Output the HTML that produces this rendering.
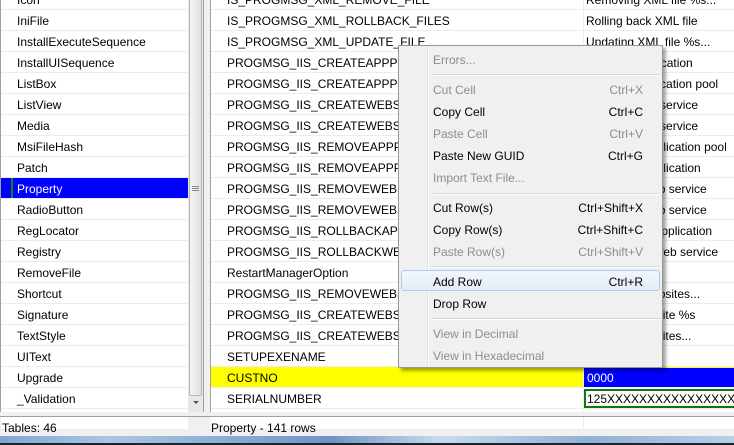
<!DOCTYPE html>
<html><head><style>
body{margin:0;width:734px;height:445px;overflow:hidden;background:#f0f0f0;font-family:"Liberation Sans",sans-serif;font-size:12px;position:relative}
.a{position:absolute;white-space:nowrap}
.lr{position:absolute;left:1px;width:187px;height:20px;border-bottom:1px solid #ececec;background:#fff;line-height:23px;text-indent:16px;overflow:hidden}
.rr{position:absolute;left:211px;width:523px;height:20px;border-bottom:1px solid #ececec;background:#fff;line-height:23px;overflow:hidden}
.rr .c1{position:absolute;left:16px}
.rr .c2{position:absolute;left:375px}
.rr .d{position:absolute;left:372px;top:0;width:1px;height:21px;background:#ececec}
.m{position:absolute;left:433px;color:#000}
.g{color:#8d8d8d}
.k{position:absolute;right:0}
.sep{position:absolute;left:431px;width:229px;height:1px;background:#d7d7d7;border-bottom:1px solid #fff}
</style></head><body>
<div class="a" style="left:0;top:0;width:1px;height:412px;background:#a0a0a0"></div>
<div id="L"></div>
<div class="a" style="left:188px;top:0;width:15px;height:412px;background:#e8e8e8"></div>
<div class="a" style="left:189px;top:0;width:13px;height:396px;background:linear-gradient(90deg,#f4f4f4,#e2e2e2);border:1px solid #b5b5b5;border-top:none;box-sizing:border-box;border-radius:0 0 2px 2px"></div>
<div class="a" style="left:192px;top:186px;width:7px;height:1px;background:#888;box-shadow:0 2px 0 #888,0 4px 0 #888"></div>
<div class="a" style="left:193px;top:401px;width:0;height:0;border-left:3px solid transparent;border-right:3px solid transparent;border-top:3px solid #555"></div>
<div class="a" style="left:203px;top:0;width:1px;height:412px;background:#a0a0a0"></div>
<div class="a" style="left:210px;top:0;width:1px;height:412px;background:#a0a0a0"></div>
<div id="R"></div>
<div class="a" style="left:0;top:412px;width:734px;height:4px;background:#f0f0f0"></div>
<div class="a" style="left:0;top:416px;width:734px;height:1px;background:#a0a0a0"></div>
<div class="a" style="left:2px;top:421px">Tables: 46</div>
<div class="a" style="left:211px;top:421px">Property - 141 rows</div>
<div class="a" style="left:0;top:436px;width:734px;height:7px;background:linear-gradient(90deg,#7fa6d4,#a8c6e8 15%,#6e94c6 45%,#c6dbf1 60%,#8fb0d8 80%,#b7cfeb)"></div>
<div class="a" style="left:0;top:443px;width:734px;height:2px;background:#222"></div>

<div class="a" style="left:398px;top:45px;width:265px;height:323px;background:#f0f0f0;border:1px solid #979797;box-sizing:border-box;box-shadow:3px 3px 3px rgba(0,0,0,.35)"></div>
<div class="a" style="left:427px;top:47px;width:1px;height:319px;background:#e2e3e3;border-right:1px solid #fff"></div>
<div class="a" style="left:401px;top:270px;width:259px;height:21px;background:linear-gradient(#f3f7fc,#e4edf8);border:1px solid #aecbee;box-sizing:border-box;border-radius:3px"></div>
<div class="a m g" style="top:53px">Errors...</div>
<div class="sep" style="top:74px"></div>
<div class="a m g" style="top:83px;width:210px">Cut Cell<span class="k">Ctrl+X</span></div>
<div class="a m" style="top:105px;width:210px">Copy Cell<span class="k">Ctrl+C</span></div>
<div class="a m g" style="top:127px;width:210px">Paste Cell<span class="k">Ctrl+V</span></div>
<div class="a m" style="top:149px;width:210px">Paste New GUID<span class="k">Ctrl+G</span></div>
<div class="a m g" style="top:171px">Import Text File...</div>
<div class="sep" style="top:193px"></div>
<div class="a m" style="top:201px;width:210px">Cut Row(s)<span class="k">Ctrl+Shift+X</span></div>
<div class="a m" style="top:223px;width:210px">Copy Row(s)<span class="k">Ctrl+Shift+C</span></div>
<div class="a m g" style="top:245px;width:210px">Paste Row(s)<span class="k">Ctrl+Shift+V</span></div>
<div class="sep" style="top:266px"></div>
<div class="a m" style="top:275px;width:210px">Add Row<span class="k">Ctrl+R</span></div>
<div class="a m" style="top:297px">Drop Row</div>
<div class="sep" style="top:318px"></div>
<div class="a m g" style="top:327px">View in Decimal</div>
<div class="a m g" style="top:349px">View in Hexadecimal</div>
<script>
var L=["Icon","IniFile","InstallExecuteSequence","InstallUISequence","ListBox","ListView","Media","MsiFileHash","Patch","Property","RadioButton","RegLocator","Registry","RemoveFile","Shortcut","Signature","TextStyle","UIText","Upgrade","_Validation",""];
var h="";L.forEach(function(t,i){var y=-11+21*i;var s=i==9?"background:#0000ff;color:#fff;":"";h+='<div class="lr" style="top:'+y+'px;'+s+'">'+(i==9?'<span style="position:absolute;left:10px;top:0;width:2px;height:20px;background:#118811"></span>':'')+t+'</div>';});
document.getElementById("L").innerHTML=h;
var R=[["IS_PROGMSG_XML_REMOVE_FILE","Removing XML file %s..."],["IS_PROGMSG_XML_ROLLBACK_FILES","Rolling back XML file changes..."],["IS_PROGMSG_XML_UPDATE_FILE","Updating XML file %s..."],["PROGMSG_IIS_CREATEAPPPOOL","Creating Application Pools..."],["PROGMSG_IIS_CREATEAPPPOOLS","Creating application pool %s"],["PROGMSG_IIS_CREATEWEBSERVICEEXTENSION","Creating web service extensions"],["PROGMSG_IIS_CREATEWEBSERVICEEXTENSIONS","Creating web service extensions"],["PROGMSG_IIS_REMOVEAPPPOOL","Removing application pool %s"],["PROGMSG_IIS_REMOVEAPPPOOLS","Removing application pools..."],["PROGMSG_IIS_REMOVEWEBSERVICEEXTENSION","Removing web service extensions"],["PROGMSG_IIS_REMOVEWEBSERVICEEXTENSIONS","Removing web service extensions"],["PROGMSG_IIS_ROLLBACKAPPPOOLS","Rolling back application pools"],["PROGMSG_IIS_ROLLBACKWEBSERVICEEXTENSIONS","Rolling back web service extensions"],["RestartManagerOption",""],["PROGMSG_IIS_REMOVEWEBSITES","Removing websites..."],["PROGMSG_IIS_CREATEWEBSITE","Creating website %s"],["PROGMSG_IIS_CREATEWEBSITES","Creating websites..."],["SETUPEXENAME",""],["CUSTNO","0000"],["SERIALNUMBER","125XXXXXXXXXXXXXXXXXXXX"],["",""]];
h="";R.forEach(function(r,i){var y=-11+21*i;var bg=i==18?"background:#ffff00;":"";var c2="";
if(i==18)c2='<span style="position:absolute;left:373px;top:1px;width:150px;height:19px;background:#0000ff;color:#fff;line-height:21px;padding-left:3px">'+r[1]+'</span>';
else if(i==19)c2='<span style="position:absolute;left:373px;top:1px;width:150px;height:19px;box-sizing:border-box;border:2px solid #0a7a0a;border-right:none;line-height:17px;padding-left:1px;overflow:hidden">'+r[1]+'</span>';
else c2='<span class="c2">'+r[1]+'</span>';
h+='<div class="rr" style="top:'+y+'px;'+bg+'"><span class="c1">'+r[0]+'</span><span class="d"></span>'+c2+'</div>';});
document.getElementById("R").innerHTML=h;
</script>
</body></html>
